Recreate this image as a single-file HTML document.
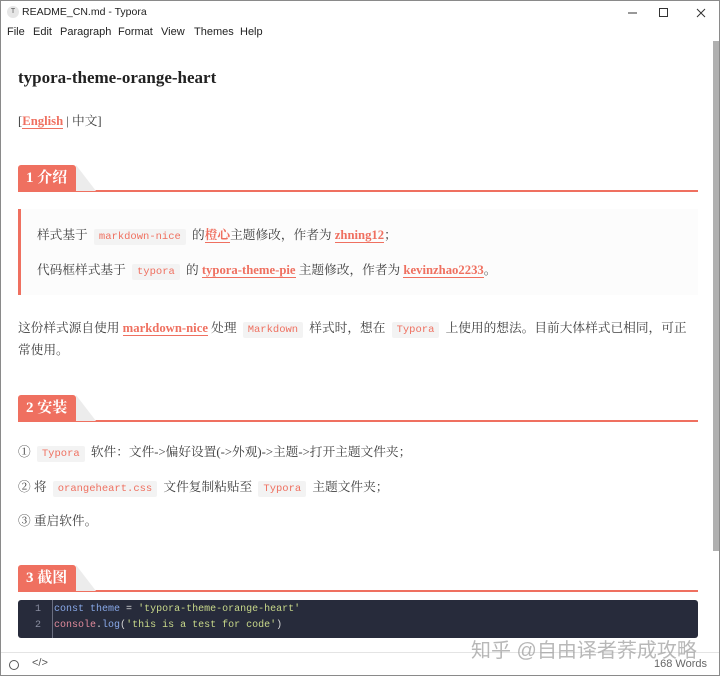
<!DOCTYPE html>
<html><head><meta charset="utf-8">
<style>
*{margin:0;padding:0;box-sizing:border-box}
html,body{width:720px;height:676px;overflow:hidden;background:#fff}
body{position:relative;font-family:"Liberation Serif","Noto Serif CJK SC",serif;color:#3f3f3f;border:1px solid #8a8a8a}
.a{position:absolute;white-space:nowrap}
.ui{font-family:"Liberation Sans","Noto Sans CJK SC",sans-serif;color:#222}
.m{position:absolute;top:25px;font-family:"Liberation Sans",sans-serif;font-size:11px;color:#222}
.t{font-size:12.7px;line-height:20px}
a{color:#ef7060;font-weight:bold;text-decoration:none;border-bottom:1px solid #ef7060}
code{font-family:"Liberation Mono",monospace;font-size:10.5px;color:#ef7060;background:#f3f3f3;padding:2px 5px;border-radius:2px;margin:0 3px}
.h2{position:absolute;left:17px;width:680px;height:27px;border-bottom:2px solid #ef7060}
.h2 .b{position:absolute;left:0;top:0;width:58px;height:26px;background:#ef7060;color:#fff;font-weight:bold;font-size:15px;line-height:26px;padding-left:8px;border-radius:3px 3px 0 0}
.h2 .tr{position:absolute;left:58px;top:0;width:0;height:0;border-bottom:26px solid #ececec;border-right:20px solid transparent}
</style></head><body>
<div class="a ui" style="left:6px;top:5px;width:12px;height:12px;border-radius:50%;background:#e6e6e6;font-size:7px;line-height:12px;text-align:center;color:#555">T</div>
<div class="a ui" style="left:21px;top:5px;font-size:10.5px">README_CN.md - Typora</div>
<svg class="a" style="left:620px;top:0" width="100" height="24"><path d="M7 12h9" stroke="#333" stroke-width="1"/><rect x="38.5" y="7.5" width="8" height="8" fill="none" stroke="#333"/><path d="M76 8l8 8M84 8l-8 8" stroke="#333"/></svg>
<span class="m" style="left:6px">File</span><span class="m" style="left:32px">Edit</span><span class="m" style="left:59px">Paragraph</span><span class="m" style="left:117px">Format</span><span class="m" style="left:160px">View</span><span class="m" style="left:193px">Themes</span><span class="m" style="left:239px">Help</span>
<div class="a" style="left:712px;top:40px;width:6px;height:510px;background:#b0b0b0"></div>

<div class="a" style="left:17px;top:67px;font-size:17px;font-weight:bold;color:#222">typora-theme-orange-heart</div>
<div class="a t" style="left:17px;top:110px">[<a>English</a> | 中文]</div>

<div class="h2" style="top:164px"><div class="b">1 介绍</div><div class="tr"></div></div>

<div class="a" style="left:17px;top:208px;width:680px;height:86px;background:#fcfcfc;border-left:3px solid #ef7060"></div>
<div class="a t" style="left:36px;top:224px">样式基于 <code>markdown-nice</code> 的<a>橙心</a>主题修改，作者为 <a>zhning12</a>；</div>
<div class="a t" style="left:36px;top:259px">代码框样式基于 <code>typora</code> 的 <a>typora-theme-pie</a> 主题修改，作者为 <a>kevinzhao2233</a>。</div>

<div class="a t" style="left:17px;top:317px">这份样式源自使用 <a>markdown-nice</a> 处理 <code>Markdown</code> 样式时，想在 <code>Typora</code> 上使用的想法。目前大体样式已相同，可正</div>
<div class="a t" style="left:17px;top:339px">常使用。</div>

<div class="h2" style="top:394px"><div class="b">2 安装</div><div class="tr"></div></div>
<div class="a t" style="left:17px;top:441px">① <code>Typora</code> 软件：文件-&gt;偏好设置(-&gt;外观)-&gt;主题-&gt;打开主题文件夹；</div>
<div class="a t" style="left:17px;top:476px">② 将 <code>orangeheart.css</code> 文件复制粘贴至 <code>Typora</code> 主题文件夹；</div>
<div class="a t" style="left:17px;top:510px">③ 重启软件。</div>

<div class="h2" style="top:564px"><div class="b">3 截图</div><div class="tr"></div></div>
<div class="a" style="left:17px;top:599px;width:680px;height:38px;background:#272b3b;border-radius:3px;font-family:'Liberation Mono',monospace;font-size:10px;line-height:16px;padding-top:2px">
<div class="a" style="left:0;top:0;width:35px;height:38px;border-right:1px solid #6a6e80"></div>
<div class="a" style="left:17px;top:2px;color:#8a8ea0">1<br>2</div>
<div class="a" style="left:36px;top:2px;color:#d7d7d7"><span style="color:#88a8e8">const</span> <span style="color:#88a8e8">theme</span> = <span style="color:#c8d88a">'typora-theme-orange-heart'</span><br><span style="color:#e08a9a">console</span>.<span style="color:#88a8e8">log</span>(<span style="color:#c8d88a">'this is a test for code'</span>)</div>
</div>

<div class="a" style="left:0;top:651px;width:718px;height:1px;background:#e4e4e4"></div>
<div class="a" style="left:8px;top:659px;width:10px;height:10px;border:1px solid #555;border-radius:50%"></div>
<div class="a ui" style="left:31px;top:656px;font-size:11px;color:#555">&lt;/&gt;</div>
<div class="a ui" style="left:653px;top:657px;font-size:11px;color:#666">168 Words</div>
<div class="a ui" style="left:470px;top:633px;font-size:20px;color:rgba(160,160,160,0.75)">知乎 @自由译者荞成攻略</div>
</body></html>
